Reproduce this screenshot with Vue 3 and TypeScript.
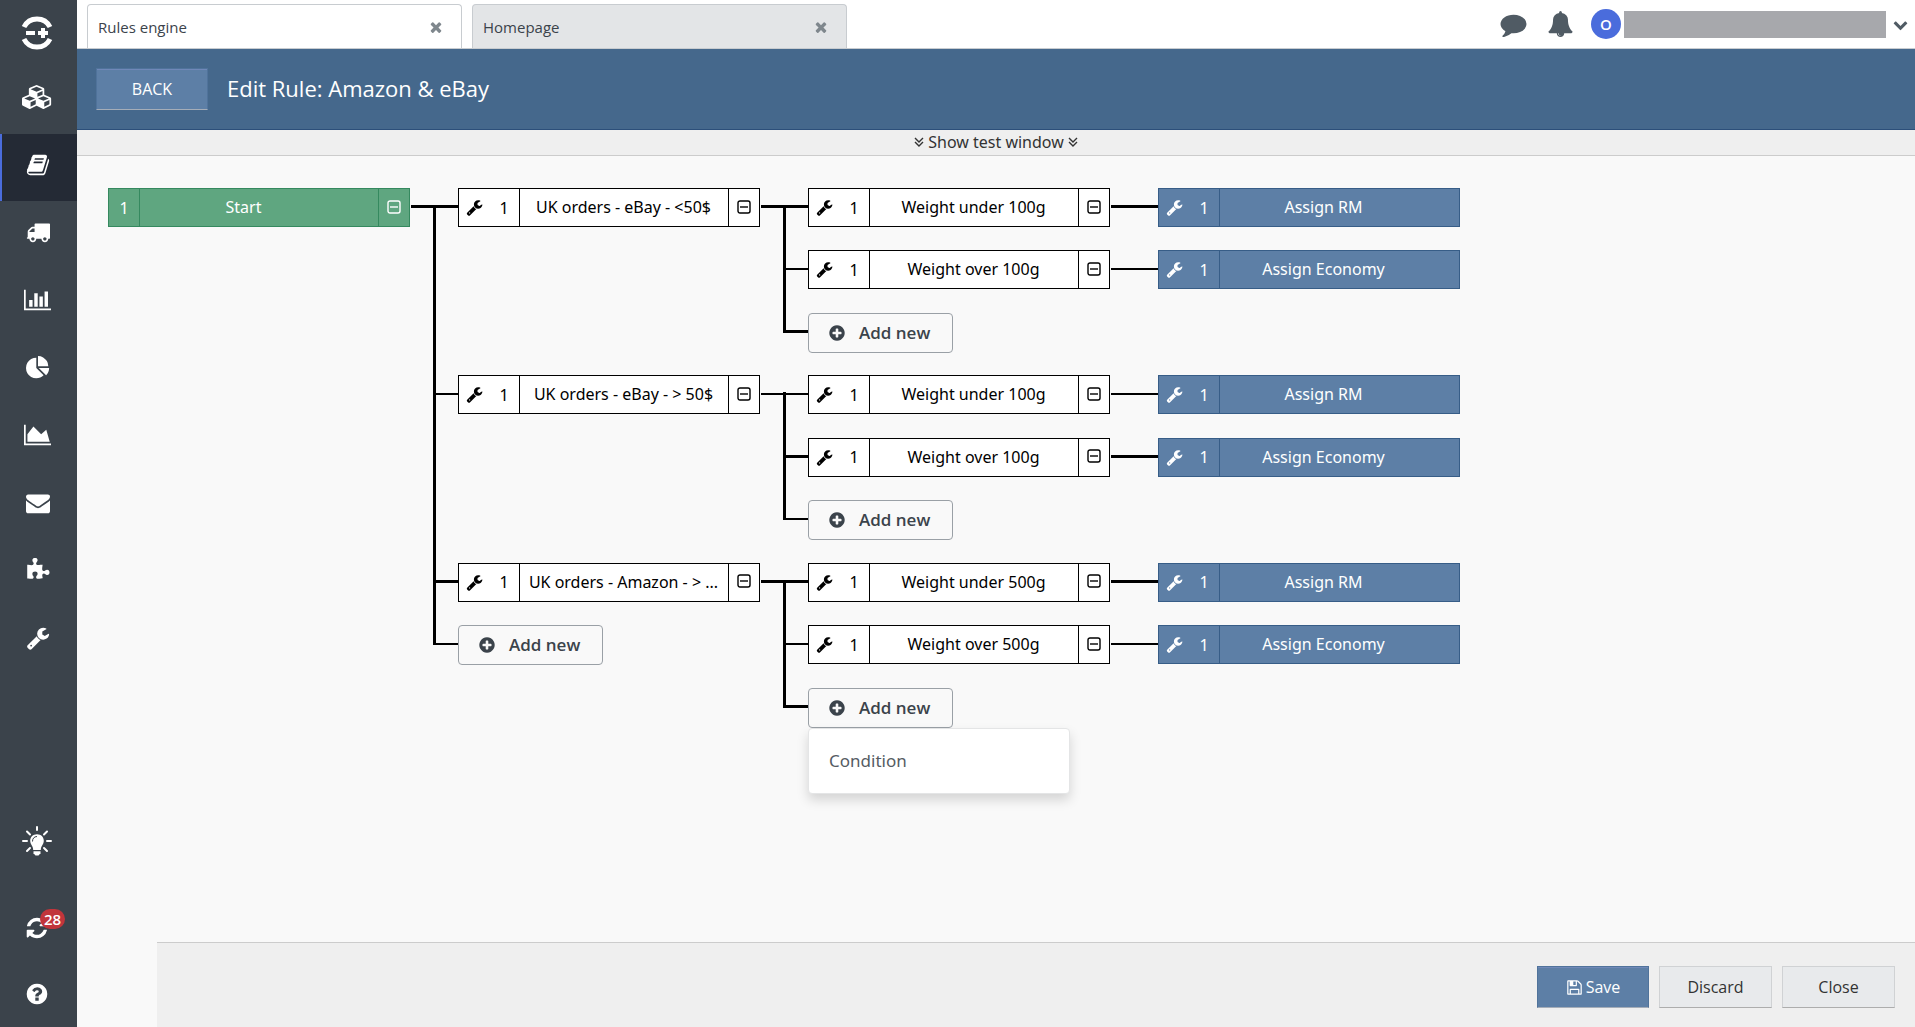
<script setup lang="ts">
import { computed, ref } from 'vue'

type Kind = 'start' | 'condition' | 'action' | 'add'

interface TreeNode {
  id: string
  kind: Kind
  title: string
  col: number
  row: number
  menu?: boolean
}

interface Icon {
  box: string
  path: string
}

const icons: Record<string, Icon> = {
  cubes: { box: '0 0 2304 1792', path: 'M640 1632l384-192v-314l-384 164v342zm-64-454l404-173-404-173-404 173zm1088 454l384-192v-314l-384 164v342zm-64-454l404-173-404-173-404 173zm-448-293l384-165v-266l-384 164v267zm-64-379l441-189-441-189-441 189zm1088 518v416q0 36-19 67t-52 47l-448 224q-25 14-57 14t-57-14l-448-224q-4-2-7-4-2 2-7 4l-448 224q-25 14-57 14t-57-14l-448-224q-33-16-52-47t-19-67v-416q0-38 21.5-70t56.5-48l434-186v-400q0-38 21.5-70t56.5-48l448-192q23-10 50-10t50 10l448 192q35 16 56.5 48t21.5 70v400l434 186q36 16 57 48t21 70z' },
  book: { box: '0 0 1792 1792', path: 'M1703 478q40 57 18 129l-275 906q-19 64-76.5 107.5t-122.5 43.5h-923q-77 0-148.5-53.5t-99.5-131.5q-24-67-2-127 0-4 3-27t4-37q1-8-3-21.5t-3-19.5q2-11 8-21t16.5-23.5 16.5-23.5q23-38 45-91.5t30-91.5q3-10 .5-30t-.5-28q3-11 17-28t17-23q21-36 42-92t25-90q1-9-2.5-32t.5-28q4-13 22-30.5t22-22.5q19-26 42.5-84.5t27.5-96.5q1-8-3-25.5t-2-26.5q2-8 9-18t18-23 17-21q8-12 16.5-30.5t15-35 16-36 19.5-32 26.5-23.5 36-11.5 47.5 5.5l-1 3q38-9 51-9h761q74 0 114 56t18 130l-274 906q-36 119-71.5 153.5t-128.5 34.5h-869q-27 0-38 15-11 16-1 43 24 70 144 70h923q29 0 56-15.5t35-41.5l300-987q7-22 5-57 38 15 59 43zm-1064 2q-4 13 2 22.5t20 9.5h608q13 0 25.5-9.5t16.5-22.5l21-64q4-13-2-22.5t-20-9.5h-608q-13 0-25.5 9.5t-16.5 22.5zm-83 256q-4 13 2 22.5t20 9.5h608q13 0 25.5-9.5t16.5-22.5l21-64q4-13-2-22.5t-20-9.5h-608q-13 0-25.5 9.5t-16.5 22.5z' },
  truck: { box: '0 0 1792 1792', path: 'M640 1408q0-52-38-90t-90-38-90 38-38 90 38 90 90 38 90-38 38-90zm-384-512h384v-256h-158q-13 0-22 9l-195 195q-9 9-9 22v30zm1280 512q0-52-38-90t-90-38-90 38-38 90 38 90 90 38 90-38 38-90zm256-1088v1024q0 15-4 26.5t-13.5 18.5-16.5 11.5-23.5 6-22.5 2-25.5 0-22.5-.5q0 106-75 181t-181 75-181-75-75-181h-384q0 106-75 181t-181 75-181-75-75-181h-64q-3 0-22.5.5t-25.5 0-22.5-2-23.5-6-16.5-11.5-13.5-18.5-4-26.5q0-26 19-45t45-19v-320q0-8-.5-35t0-38 2.5-34.5 6.5-37 14-30.5 22.5-30l198-198q19-19 50.5-32t58.5-13h160v-192q0-26 19-45t45-19h1024q26 0 45 19t19 45z' },
  bars: { box: '0 0 2048 1792', path: 'M640 896v512h-256v-512h256zm384-512v1024h-256v-1024h256zm1024 1152v128h-2048v-1536h128v1408h1920zm-640-896v768h-256v-768h256zm384-384v1152h-256v-1152h256z' },
  pie: { box: '0 0 1792 1792', path: 'M768 890l546 546q-106 108-247.5 168t-298.5 60q-209 0-385.5-103t-279.5-279.5-103-385.5 103-385.5 279.5-279.5 385.5-103v762zm187 6h773q0 157-60 298.5t-168 247.5zm709-128h-768v-768q209 0 385.5 103t279.5 279.5 103 385.5z' },
  area: { box: '0 0 2048 1792', path: 'M2048 1536v128h-2048v-1536h128v1408h1920zm-384-1024l256 896h-1664v-576l448-576 576 576z' },
  mail: { box: '0 0 1792 1792', path: 'M1792 710v794q0 66-47 113t-113 47h-1472q-66 0-113-47t-47-113v-794q44 49 101 87 362 246 497 345 57 42 92.5 65.5t94.5 48 110 24.5h2q51 0 110-24.5t94.5-48 92.5-65.5q170-123 498-345 57-39 100-87zm0-294q0 79-49 151t-122 123q-376 261-468 325-10 7-42.5 31t-54 38.5-52 32.5-57.5 27-50 9h-2q-23 0-50-9t-57.5-27-52-32.5-54-38.5-42.5-31q-91-64-262-182.5t-205-142.5q-62-42-117-115.5t-55-136.5q0-78 41.5-130t118.5-52h1472q65 0 112.5 47t47.5 113z' },
  puzzle: { box: '0 0 1792 1792', path: 'M1755 1083q0 81-44.5 135t-123.5 54q-41 0-77.5-17.5t-59-38-56.5-38-71-17.5q-110 0-110 124 0 39 16 115t15 115v5q-22 0-33 1-34 3-97.5 11.5t-115.5 13.5-98 5q-61 0-103-26.5t-42-83.5q0-37 17.5-71t38-56.5 38-59 17.5-77.5q0-79-54-123.5t-135-44.5q-84 0-143 45.5t-59 127.5q0 43 15 83t33.5 64.5 33.5 53 15 50.5q0 45-46 89-37 35-117 35-95 0-245-24-9-2-27.5-4t-27.5-4l-13-2q-1 0-3-1-2 0-2-1v-1024q2 1 17.5 3.5t34 5 21.5 3.5q150 24 245 24 80 0 117-35 46-44 46-89 0-22-15-50.5t-33.5-53-33.5-64.5-15-83q0-82 59-127.5t144-45.5q80 0 134 44.5t54 123.5q0 41-17.5 77.5t-38 59-38 56.5-17.5 71q0 57 42 83.5t103 26.5q64 0 180-15t163-17v2q-1 2-3.5 17.5t-5 34-3.5 21.5q-24 150-24 245 0 80 35 117 44 46 89 46 22 0 50.5-15t53-33.5 64.5-33.5 83-15q82 0 127.5 59t45.5 143z' },
  wrench: { box: '0 0 1792 1792', path: 'M448 1472q0-26-19-45t-45-19-45 19-19 45 19 45 45 19 45-19 19-45zm644-420l-682 682q-37 37-90 37-52 0-91-37l-106-108q-38-36-38-90 0-53 38-91l681-681q39 98 114.5 173.5t173.5 114.5zm634-435q0 39-23 106-47 134-164.5 217.5t-258.5 83.5q-185 0-316.5-131.5t-131.5-316.5 131.5-316.5 316.5-131.5q58 0 121.5 16.5t107.5 46.5q16 11 16 28t-16 28l-293 169v224l193 107q5-3 79-48.5t135.5-81 70.5-35.5q15 0 23.5 10t8.5 25z' },
  refresh: { box: '0 0 1792 1792', path: 'M1639 1056q0 5-1 7-64 268-268 434.5t-478 166.5q-146 0-282.5-55t-243.5-157l-129 129q-19 19-45 19t-45-19-19-45v-448q0-26 19-45t45-19h448q26 0 45 19t19 45-19 45l-137 137q71 66 161 102t187 36q134 0 250-65t186-179q11-17 53-117 8-23 30-23h192q13 0 22.5 9.5t9.5 22.5zm25-800v448q0 26-19 45t-45 19h-448q-26 0-45-19t-19-45 19-45l138-138q-148-137-349-137-134 0-250 65t-186 179q-11 17-53 117-8 23-30 23h-199q-13 0-22.5-9.5t-9.5-22.5v-7q65-268 270-434.5t480-166.5q146 0 284 55.5t245 156.5l130-129q19-19 45-19t45 19 19 45z' },
  help: { box: '0 0 1792 1792', path: 'M1024 1376v-192q0-14-9-23t-23-9h-192q-14 0-23 9t-9 23v192q0 14 9 23t23 9h192q14 0 23-9t9-23zm256-672q0-88-55.5-163t-138.5-116-170-41q-243 0-371 213-15 24 8 42l132 100q7 6 19 6 16 0 25-12 53-68 86-92 34-24 86-24 48 0 85.5 26t37.5 59q0 38-20 61t-68 45q-63 28-115.5 86.5t-52.5 125.5v36q0 14 9 23t23 9h192q14 0 23-9t9-23q0-19 21.5-49.5t54.5-49.5q32-18 49-28.5t46-35 44.5-48 28-60.5 12.5-81zm384 192q0 209-103 385.5t-279.5 279.5-385.5 103-385.5-103-279.5-279.5-103-385.5 103-385.5 279.5-279.5 385.5-103 385.5 103 279.5 279.5 103 385.5z' },
  comment: { box: '0 0 1792 1792', path: 'M1792 896q0 174-120 321.5t-326 233-450 85.5q-70 0-145-8-198 175-460 242-49 14-114 22-17 2-30.5-9t-17.5-29v-1q-3-4-.5-12t2-10 4.5-9.5l6-9 7-8.5 8-9q7-8 31-34.5t34.5-38 31-39.5 32.5-51 27-59 26-76q-157-89-247.5-220t-90.5-281q0-130 71-248.5t191-204.5 286-136.5 348-50.5q244 0 450 85.5t326 233 120 321.5z' },
  bell: { box: '0 0 1792 1792', path: 'M912 1696q0-16-16-16-59 0-101.5-42.5t-42.5-101.5q0-16-16-16t-16 16q0 73 51.5 124.5t124.5 51.5q16 0 16-16zm816-288q0 52-38 90t-90 38h-448q0 106-75 181t-181 75-181-75-75-181h-448q-52 0-90-38t-38-90q50-42 91-88t85-119.5 74.5-158.5 50-206 19.5-260q0-152 117-282.5t307-158.5q-8-19-8-39 0-40 28-68t68-28 68 28 28 68q0 20-8 39 190 28 307 158.5t117 282.5q0 139 19.5 260t50 206 74.5 158.5 85 119.5 91 88z' },
  times: { box: '0 0 1792 1792', path: 'M1490 1322q0 40-28 68l-136 136q-28 28-68 28t-68-28l-294-294-294 294q-28 28-68 28t-68-28l-136-136q-28-28-28-68t28-68l294-294-294-294q-28-28-28-68t28-68l136-136q28-28 68-28t68 28l294 294 294-294q28-28 68-28t68 28l136 136q28 28 28 68t-28 68l-294 294 294 294q28 28 28 68z' },
  chevron: { box: '0 0 1792 1792', path: 'M1683 808l-742 741q-19 19-45 19t-45-19l-742-741q-19-19-19-45.5t19-45.5l166-165q19-19 45-19t45 19l531 531 531-531q19-19 45-19t45 19l166 165q19 19 19 45.5t-19 45.5z' },
  plus: { box: '0 0 1792 1792', path: 'M1344 960v-128q0-26-19-45t-45-19h-256v-256q0-26-19-45t-45-19h-128q-26 0-45 19t-19 45v256h-256q-26 0-45 19t-19 45v128q0 26 19 45t45 19h256v256q0 26 19 45t45 19h128q26 0 45-19t19-45v-256h256q26 0 45-19t19-45zm320-64q0 209-103 385.5t-279.5 279.5-385.5 103-385.5-103-279.5-279.5-103-385.5 103-385.5 279.5-279.5 385.5-103 385.5 103 279.5 279.5 103 385.5z' },
  save: { box: '0 0 1792 1792', path: 'M512 1536h768v-384h-768v384zm896 0h128v-896q0-14-10-38.5t-20-34.5l-281-281q-10-10-34-20t-39-10v416q0 40-28 68t-68 28h-576q-40 0-68-28t-28-68v-416h-128v1280h128v-416q0-40 28-68t68-28h832q40 0 68 28t28 68v416zm-384-928v-320q0-13-9.5-22.5t-22.5-9.5h-192q-13 0-22.5 9.5t-9.5 22.5v320q0 13 9.5 22.5t22.5 9.5h192q13 0 22.5-9.5t9.5-22.5zm640 32v928q0 40-28 68t-68 28h-1344q-40 0-68-28t-28-68v-1344q0-40 28-68t68-28h928q40 0 88 20t76 48l280 280q28 28 48 76t20 88z' },
}

const nav = [
  { icon: 'cubes', label: 'Inventory' },
  { icon: 'book', label: 'Orders' },
  { icon: 'truck', label: 'Shipping' },
  { icon: 'bars', label: 'Reports' },
  { icon: 'pie', label: 'Dashboards' },
  { icon: 'area', label: 'Forecast' },
  { icon: 'mail', label: 'Email' },
  { icon: 'puzzle', label: 'Apps' },
  { icon: 'wrench', label: 'Settings' },
]

const tabs = ['Rules engine', 'Homepage']
const activeTab = ref(0)

const branches = [
  { title: 'UK orders - eBay - <50$', limit: '100g' },
  { title: 'UK orders - eBay - > 50$', limit: '100g' },
  { title: 'UK orders - Amazon - > ...', limit: '500g' },
]

const nodes = computed<TreeNode[]>(() => {
  const list: TreeNode[] = [{ id: 'start', kind: 'start', title: 'Start', col: 1, row: 1 }]
  branches.forEach((branch, i) => {
    const row = i * 3 + 1
    list.push(
      { id: `b${i}`, kind: 'condition', title: branch.title, col: 2, row },
      { id: `u${i}`, kind: 'condition', title: `Weight under ${branch.limit}`, col: 3, row },
      { id: `r${i}`, kind: 'action', title: 'Assign RM', col: 4, row },
      { id: `o${i}`, kind: 'condition', title: `Weight over ${branch.limit}`, col: 3, row: row + 1 },
      { id: `e${i}`, kind: 'action', title: 'Assign Economy', col: 4, row: row + 1 },
      { id: `n${i}`, kind: 'add', title: 'Add new', col: 3, row: row + 2, menu: i === 2 },
    )
  })
  list.push({ id: 'root-add', kind: 'add', title: 'Add new', col: 2, row: 8 })
  return list
})

/* Vertical lines: parent column, first and last child row. */
const trunks = [
  { col: 1, from: 1, to: 8 },
  { col: 2, from: 1, to: 3 },
  { col: 2, from: 4, to: 6 },
  { col: 2, from: 7, to: 9 },
]
</script>

<template>
  <div class="app">
    <aside class="sidebar">
      <a class="logo" href="#" aria-label="Home">
        <svg viewBox="0 0 36 36" width="36" height="36" fill="none" stroke="#fff">
          <path d="M5 12A14.5 14.5 0 0 1 31 12M5 24A14.5 14.5 0 0 0 31 24" stroke-width="5" />
          <path d="M7 18h9M19 18h10M24 13v10" stroke-width="4" />
        </svg>
      </a>
      <nav class="nav">
        <a
          v-for="(item, i) in nav"
          :key="item.icon"
          href="#"
          class="nav-item"
          :class="{ active: i === 1 }"
          :aria-label="item.label"
        >
          <svg class="icon-nav" :viewBox="icons[item.icon].box"><path :d="icons[item.icon].path" /></svg>
        </a>
      </nav>
      <div class="nav-bottom">
        <a class="tips" href="#" aria-label="Tips">
          <svg viewBox="0 0 30 30" width="30" height="30">
            <path
              d="M15 1v3M1 15h4M25 15h4M5 5.500l3 3M25 5.500l-3 3M5 25l3-3M25 25l-3-3"
              fill="none"
              stroke="#fff"
              stroke-width="2"
              stroke-linecap="round"
            />
            <path
              d="M15 8.200c4 0 6.800 2.800 6.800 6.500 0 3.800-3 5-3 9.300h-7.600c0-4.300-3-5.500-3-9.300 0-3.700 2.800-6.500 6.800-6.500z"
              fill="#fff"
            />
            <path d="M10.500 15.500c0-3 1.600-4.900 4.500-5" fill="none" stroke="#3b434b" stroke-width="1" />
            <path d="M11.500 25.200h7v2l-2 2.300h-3l-2-2.300z" fill="#fff" />
          </svg>
        </a>
        <a class="sync" href="#" aria-label="Sync">
          <svg class="icon-nav" :viewBox="icons.refresh.box"><path :d="icons.refresh.path" /></svg>
          <span class="badge">28</span>
        </a>
        <a class="help" href="#" aria-label="Help">
          <svg class="icon-nav" :viewBox="icons.help.box"><path :d="icons.help.path" /></svg>
        </a>
      </div>
    </aside>

    <main class="main">
      <header class="topbar">
        <div class="tabs">
          <div v-for="(tab, i) in tabs" :key="tab" class="tab" :class="{ current: i === activeTab }">
            <button class="tab-label" type="button" @click="activeTab = i">{{ tab }}</button>
            <button class="tab-close" type="button" :aria-label="`Close ${tab}`">
              <svg :viewBox="icons.times.box"><path :d="icons.times.path" /></svg>
            </button>
          </div>
        </div>
        <div class="account">
          <button type="button" aria-label="Messages">
            <svg class="icon-top" :viewBox="icons.comment.box"><path :d="icons.comment.path" /></svg>
          </button>
          <button class="bell" type="button" aria-label="Notifications">
            <svg class="icon-top" :viewBox="icons.bell.box"><path :d="icons.bell.path" /></svg>
          </button>
          <span class="avatar">O</span>
          <span class="user-name"></span>
          <button type="button" aria-label="Account menu">
            <svg class="icon-chevron" :viewBox="icons.chevron.box"><path :d="icons.chevron.path" /></svg>
          </button>
        </div>
      </header>

      <section class="titlebar">
        <button class="btn primary" type="button">BACK</button>
        <h1>Edit Rule: Amazon &amp; eBay</h1>
      </section>

      <button class="test-toggle" type="button">
        <svg viewBox="0 0 10 10"><path d="M1 1l4 4 4-4M1 5l4 4 4-4" /></svg>
        <span>Show test window</span>
        <svg viewBox="0 0 10 10"><path d="M1 1l4 4 4-4M1 5l4 4 4-4" /></svg>
      </button>

      <section class="canvas">
        <div class="tree">
          <div
            v-for="(t, i) in trunks"
            :key="`t${i}`"
            class="trunk"
            :style="{ gridColumn: t.col, gridRow: `${t.from} / ${t.to}` }"
          ></div>
          <div
            v-for="n in nodes"
            :key="n.id"
            class="cell"
            :class="{ inward: n.col > 1, outward: n.kind === 'start' || n.kind === 'condition', thin: n.row % 2 === 0 }"
            :style="{ gridColumn: n.col, gridRow: n.row }"
          >
            <template v-if="n.kind === 'add'">
              <button class="add" type="button">
                <svg :viewBox="icons.plus.box"><path :d="icons.plus.path" /></svg>
                <span>{{ n.title }}</span>
              </button>
              <div v-if="n.menu" class="menu">
                <button type="button">Condition</button>
              </div>
            </template>
            <div v-else class="node" :class="n.kind">
              <div class="lead">
                <svg v-if="n.kind !== 'start'" class="icon-node" :viewBox="icons.wrench.box">
                  <path :d="icons.wrench.path" />
                </svg>
                <span class="num">1</span>
              </div>
              <div class="title">{{ n.title }}</div>
              <button v-if="n.kind !== 'action'" class="collapse" type="button" aria-label="Collapse">
                <svg viewBox="0 0 14 14">
                  <rect x="1" y="1" width="12" height="12" rx="2" />
                  <path d="M3 7h8" />
                </svg>
              </button>
            </div>
          </div>
        </div>
      </section>

      <footer class="footer">
        <button class="btn primary" type="button">
          <svg :viewBox="icons.save.box"><path :d="icons.save.path" /></svg>
          <span>Save</span>
        </button>
        <button class="btn" type="button">Discard</button>
        <button class="btn" type="button">Close</button>
      </footer>
    </main>
  </div>
</template>

<style>
body {
  margin: 0;
  background: #f9f9f9;
}
</style>

<style scoped>
.app {
  display: flex;
  min-height: 100vh;
  font-family: 'Open Sans', 'Noto Sans', sans-serif;
  font-size: 16px;
  line-height: 24px;
  color: #333;
}

.app * {
  box-sizing: border-box;
}

button {
  margin: 0;
  padding: 0;
  border: 0;
  background: none;
  font: inherit;
  color: inherit;
  cursor: pointer;
}

svg {
  display: block;
  flex: none;
  fill: currentColor;
}

.logo svg {
  fill: none;
}

/* Sidebar */
.sidebar {
  display: flex;
  flex-direction: column;
  flex: none;
  width: 77px;
  background: #3b434b;
}

.sidebar a {
  color: #fff;
  display: flex;
  align-items: center;
  justify-content: center;
  padding-right: 4px;
}

.logo {
  height: 66px;
}

.nav {
  display: flex;
  flex-direction: column;
  height: 608px;
}

.nav-item {
  flex: 1;
  padding-bottom: 5px;
  border-left: 2px solid transparent;
}

.nav-item.active {
  background: #242a35;
  border-left-color: #4a6cdc;
}

.icon-nav {
  height: 24px;
}

.nav-bottom {
  margin-top: auto;
}

.tips {
  height: 106px;
}

.sync {
  position: relative;
  height: 67px;
}

.help {
  height: 66px;
}

.badge {
  position: absolute;
  left: 40px;
  top: 15px;
  width: 25px;
  height: 20px;
  border-radius: 10px;
  background: #c1353b;
  font-size: 15px;
  font-weight: 600;
  line-height: 20px;
  text-align: center;
}

/* Top bar */
.main {
  display: flex;
  flex-direction: column;
  flex: 1;
  min-width: 0;
}

.topbar {
  display: flex;
  justify-content: space-between;
  height: 49px;
  padding: 0 7px 0 10px;
  border-bottom: 1px solid #c8ccd0;
  background: #fff;
}

.tabs {
  display: flex;
  align-items: flex-end;
  gap: 10px;
}

.tab {
  display: flex;
  align-items: center;
  justify-content: space-between;
  width: 375px;
  height: 44px;
  padding: 0 17px 0 10px;
  border: 1px solid #c8ccd0;
  border-bottom: 0;
  border-radius: 4px 4px 0 0;
  background: #e3e5e7;
  font-size: 15px;
  color: #3b434b;
}

.tab.current {
  background: #fff;
}

.tab-close {
  color: #7f878d;
}

.tab-close svg {
  width: 16px;
  height: 16px;
}

.account {
  display: flex;
  align-items: center;
  color: #505b64;
}

.icon-top {
  width: 27px;
  height: 26px;
}

.bell {
  margin: 0 17px 0 20px;
}

.avatar {
  width: 30px;
  height: 30px;
  margin-right: 3px;
  border-radius: 15px;
  background: #4a6cdc;
  font-size: 15px;
  font-weight: 600;
  line-height: 30px;
  text-align: center;
  color: #fff;
}

.user-name {
  width: 262px;
  height: 27px;
  margin-right: 7px;
  background: #a7a8ac;
}

.icon-chevron {
  width: 15px;
  height: 15px;
}

/* Title bar */
.titlebar {
  display: flex;
  align-items: center;
  gap: 19px;
  height: 81px;
  padding: 0 19px;
  border-bottom: 1px solid #2c4f7a;
  background: #45688c;
}

h1 {
  margin: 0;
  padding-bottom: 2px;
  font-size: 22px;
  font-weight: 400;
  line-height: 32px;
  color: #fff;
}

.btn {
  display: flex;
  align-items: center;
  justify-content: center;
  gap: 3px;
  width: 113px;
  height: 42px;
  border: 1px solid #d0d2d4;
  border-bottom-color: #adadad;
  background: #e8eaec;
}

.btn.primary {
  width: 112px;
  border-color: #50739b;
  border-bottom-color: #a5adb8;
  background: #5d7fa6;
  box-shadow: inset 0 1px #7088b8;
  color: #fff;
}

.btn svg {
  width: 17px;
  height: 17px;
}

.test-toggle {
  display: flex;
  align-items: center;
  justify-content: center;
  gap: 4px;
  height: 26px;
  padding-bottom: 2px;
  border-bottom: 1px solid #ccc;
  background: #efefef;
  font-family: 'Noto Sans', 'Open Sans', sans-serif;
}

.test-toggle svg {
  width: 10px;
  height: 10px;
  fill: none;
  stroke: currentColor;
  stroke-width: 1.4;
}

/* Rule tree */
.canvas {
  flex: 1;
  padding: 32px 31px;
}

.tree {
  display: grid;
  grid-template-columns: repeat(4, 302px);
  grid-template-rows: repeat(9, 1fr);
  column-gap: 48px;
  height: 562px;
  font-family: 'Noto Sans', 'Open Sans', sans-serif;
}

.trunk {
  justify-self: end;
  width: 3px;
  margin: 17px -26px -20px 0;
  background: #000;
}

.cell {
  position: relative;
}

.cell.inward::before,
.cell.outward::after {
  content: '';
  position: absolute;
  top: 17px;
  height: 3px;
  background: #000;
}

.cell.inward::before {
  right: 100%;
  width: 25px;
}

.cell.outward::after {
  left: 303px;
  width: 23px;
}

.cell.thin::before,
.cell.thin::after {
  top: 18px;
  height: 2px;
}

.node {
  display: flex;
  height: 39px;
  border: 1px solid var(--line);
  background: var(--fill);
  color: var(--ink);
}

.start {
  --line: #35895f;
  --fill: #5fa680;
  --ink: #fff;
}

.condition {
  --line: #000;
  --fill: #fff;
  --ink: #000;
}

.action {
  --line: #375d87;
  --fill: #5d7fa6;
  --ink: #fff;
}

.lead {
  display: flex;
  align-items: center;
  width: 61px;
  padding-left: 7px;
  border-right: 1px solid var(--line);
}

.start .lead {
  width: 31px;
  padding-left: 0;
}

.icon-node {
  width: 17px;
  height: 17px;
}

.num {
  flex: 1;
  text-align: center;
}

.icon-node + .num {
  padding-left: 6px;
}

.title {
  width: 207px;
  line-height: 37px;
  text-align: center;
  white-space: nowrap;
}

.collapse {
  width: 31px;
  margin-left: auto;
  padding-bottom: 2px;
  border-left: 1px solid var(--line);
}

.collapse svg {
  width: 14px;
  height: 14px;
  margin: 0 auto;
  fill: none;
  stroke: currentColor;
  stroke-width: 1.4;
}

.add {
  display: flex;
  align-items: center;
  gap: 13px;
  width: 145px;
  height: 40px;
  padding-left: 19px;
  border: 1px solid #9aa0a6;
  border-radius: 4px;
  font-family: 'Open Sans', 'Noto Sans', sans-serif;
  font-size: 17px;
  font-weight: 600;
  color: #3b434b;
}

.add svg {
  width: 18px;
  height: 18px;
}

.menu {
  position: absolute;
  left: 0;
  top: 40px;
  z-index: 1;
  width: 262px;
  border: 1px solid #e4e5e6;
  border-radius: 4px;
  background: #fff;
  box-shadow: 0 6px 12px rgba(0, 0, 0, 0.15);
  font-size: 17px;
  color: #555c63;
}

.menu button {
  display: block;
  width: 100%;
  padding: 20px;
  text-align: left;
}

/* Footer */
.footer {
  display: flex;
  align-items: center;
  justify-content: flex-end;
  gap: 10px;
  height: 85px;
  margin-left: 80px;
  padding: 4px 20px 0;
  border-top: 1px solid #ccc;
  background: #efefef;
}
</style>
